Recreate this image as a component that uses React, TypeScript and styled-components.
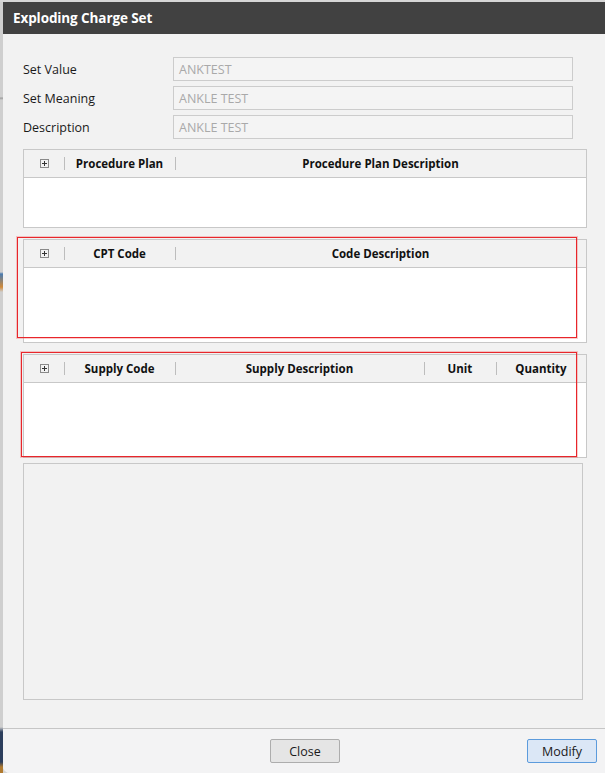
import { Fragment } from "react";
import styled, { createGlobalStyle } from "styled-components";

const GlobalStyle = createGlobalStyle`
  * { box-sizing: border-box; }
  html, body { margin: 0; padding: 0; height: 100%; }
  body {
    font-family: "Open Sans", "Noto Sans", "Liberation Sans", sans-serif;
    background: #d6d6d6;
    overflow: hidden;
  }
  #root { height: 100%; }
`;

const Page = styled.div`
  display: flex;
  height: 773px;
  padding-top: 2px;
`;

// bit of the app behind the dialog, visible at the left edge
const BehindStrip = styled.div`
  width: 3px;
  flex-shrink: 0;
  background: linear-gradient(
    180deg,
    #cfcfcf 0,
    #cfcfcf 95px,
    #9a9a9a 96px,
    #cfcfcf 98px,
    #cfcfcf 270px,
    #4a7bb0 272px,
    #d08a3a 285px,
    #cfcfcf 290px,
    #cfcfcf 725px,
    #2c3e5c 730px,
    #2c3e5c 760px,
    #b07a30 765px
  );
`;

const Window = styled.div`
  flex: 1;
  display: flex;
  flex-direction: column;
  background: #f2f2f2;
  border-bottom-left-radius: 7px;
  overflow: hidden;
`;

const TitleBar = styled.div`
  height: 32px;
  flex-shrink: 0;
  background: #414141;
  display: flex;
  align-items: center;
  padding-left: 10px;
`;

const Title = styled.span`
  color: #ffffff;
  font-weight: 700;
  font-size: 13.5px;
  letter-spacing: -0.1px;
`;

const Content = styled.div`
  flex: 1;
  display: flex;
  flex-direction: column;
  padding: 23px 18px 28px 20px;
`;

const Form = styled.div`
  display: grid;
  grid-template-columns: 150px 400px;
  row-gap: 5px;
  align-items: center;
`;

const FieldLabel = styled.label`
  font-size: 12.5px;
  color: #1a1a1a;
`;

const FieldInput = styled.div`
  height: 24px;
  border: 1px solid #cccccc;
  background: #f4f4f4;
  color: #a9a9a9;
  font-size: 12.5px;
  display: flex;
  align-items: center;
  padding-left: 5px;
`;

const Grid = styled.div<{ $height: number; $gap: number }>`
  position: relative;
  margin-top: ${(p) => p.$gap}px;
  height: ${(p) => p.$height}px;
  border: 1px solid #c8c8c8;
  background: #ffffff;
  display: flex;
  flex-direction: column;
`;

const GridHeader = styled.div<{ $cols: string }>`
  height: 28px;
  flex-shrink: 0;
  display: grid;
  grid-template-columns: ${(p) => p.$cols};
  background: #f2f2f2;
  border-bottom: 1px solid #c8c8c8;
`;

const HeaderCell = styled.div<{ $divider?: boolean }>`
  position: relative;
  display: flex;
  align-items: center;
  justify-content: center;
  font-size: 11.5px;
  font-weight: 700;
  color: #111111;
  white-space: nowrap;

  &::before {
    content: "";
    display: ${(p) => (p.$divider ? "block" : "none")};
    position: absolute;
    left: 0;
    top: 7px;
    height: 13px;
    width: 1px;
    background: #bdbdbd;
  }
`;

const ExpandIcon = styled.svg`
  width: 9px;
  height: 9px;
  display: block;
`;

const GridBody = styled.div`
  flex: 1;
  background: #ffffff;
`;

// red annotation boxes drawn over the screenshot
const Highlight = styled.div<{ $l: number; $t: number; $r: number; $b: number }>`
  position: absolute;
  left: ${(p) => p.$l}px;
  top: ${(p) => p.$t}px;
  right: ${(p) => p.$r}px;
  bottom: ${(p) => p.$b}px;
  border: 1px solid #e8262b;
  box-shadow: 0 0 0 1px rgba(240, 110, 110, 0.35);
  pointer-events: none;
`;

const EmptyPanel = styled.div`
  flex: 1;
  margin-top: 5px;
  margin-right: 4px;
  border: 1px solid #c8c8c8;
  background: #f2f2f2;
`;

const Footer = styled.div`
  height: 45px;
  flex-shrink: 0;
  border-top: 1px solid #c6c6c6;
  background: #f3f3f4;
  display: grid;
  grid-template-columns: 1fr auto 1fr;
  align-items: start;
  padding: 10px 8px 0 10px;
`;

const Button = styled.button<{ $primary?: boolean }>`
  grid-column: ${(p) => (p.$primary ? 3 : 2)};
  justify-self: ${(p) => (p.$primary ? "end" : "center")};
  width: 70px;
  height: 24px;
  font-family: inherit;
  font-size: 12.5px;
  color: #1a1a1a;
  background: ${(p) => (p.$primary ? "#dbe7f6" : "#e5e5e5")};
  border: 1px solid ${(p) => (p.$primary ? "#5c9bdc" : "#adadad")};
  border-radius: 2px;
  padding: 0;
  cursor: pointer;
`;

type Column = { title: string };

const Plus = () => (
  <ExpandIcon viewBox="0 0 9 9">
    <rect x="0.5" y="0.5" width="8" height="8" fill="none" stroke="#8a8a8a" />
    <path d="M2 4.5h5M4.5 2v5" stroke="#333" strokeWidth="1" />
  </ExpandIcon>
);

function DataGrid({
  cols,
  columns,
  height,
  gap,
  highlight,
}: {
  cols: string;
  columns: Column[];
  height: number;
  gap: number;
  highlight?: { l: number; t: number; r: number; b: number };
}) {
  return (
    <Grid $height={height} $gap={gap}>
      <GridHeader $cols={cols}>
        <HeaderCell>
          <Plus />
        </HeaderCell>
        {columns.map((c) => (
          <HeaderCell key={c.title} $divider>
            {c.title}
          </HeaderCell>
        ))}
      </GridHeader>
      <GridBody />
      {highlight ? <Highlight $l={highlight.l} $t={highlight.t} $r={highlight.r} $b={highlight.b} /> : null}
    </Grid>
  );
}

const fields = [
  { label: "Set Value", value: "ANKTEST" },
  { label: "Set Meaning", value: "ANKLE TEST" },
  { label: "Description", value: "ANKLE TEST" },
];

export default function App() {
  return (
    <>
      <GlobalStyle />
      <Page>
        <BehindStrip />
        <Window>
          <TitleBar>
            <Title>Exploding Charge Set</Title>
          </TitleBar>
          <Content>
            <Form>
              {fields.map((f) => (
                <Fragment key={f.label}>
                  <FieldLabel>{f.label}</FieldLabel>
                  <FieldInput>{f.value}</FieldInput>
                </Fragment>
              ))}
            </Form>
            <DataGrid
              gap={10}
              height={79}
              cols="40px 111px 1fr"
              columns={[{ title: "Procedure Plan" }, { title: "Procedure Plan Description" }]}
            />
            <DataGrid
              gap={11}
              height={104}
              cols="40px 111px 1fr"
              columns={[{ title: "CPT Code" }, { title: "Code Description" }]}
              highlight={{ l: -7, t: -3, r: 9, b: 4 }}
            />
            <DataGrid
              gap={11}
              height={104}
              cols="40px 111px 1fr 72px 90px"
              columns={[
                { title: "Supply Code" },
                { title: "Supply Description" },
                { title: "Unit" },
                { title: "Quantity" },
              ]}
              highlight={{ l: -3, t: -3, r: 9, b: 0 }}
            />
            <EmptyPanel />
          </Content>
          <Footer>
            <Button>Close</Button>
            <Button $primary>Modify</Button>
          </Footer>
        </Window>
      </Page>
    </>
  );
}
